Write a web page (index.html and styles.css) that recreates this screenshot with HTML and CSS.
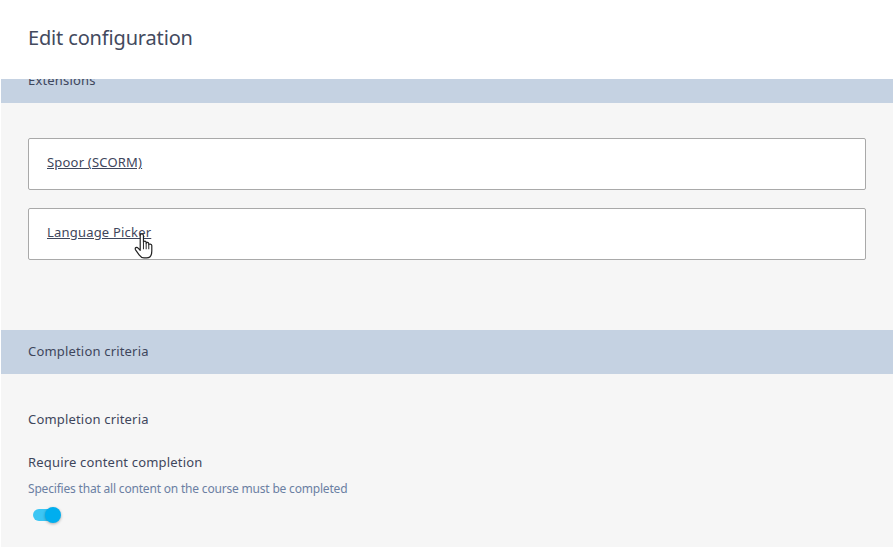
FILE: index.html
```html
<!DOCTYPE html>
<html lang="en">
<head>
  <meta charset="UTF-8" />
  <title>Edit configuration</title>
  <link rel="stylesheet" href="styles.css">
</head>
<body>

  <div class="header">
    <h1>Edit configuration</h1>
  </div>

  <div class="content">
    <div class="section-bar">Extensions</div>
    <div class="extensions">
      <div class="extension"><a href="#">Spoor (SCORM)</a></div>
      <div class="extension">
        <a href="#">Language Picker</a>
        <!-- mouse pointer caught in the shot -->
        <svg class="cursor" width="20" height="26" viewBox="0 0 18 24">
          <path d="M5.500 14V2.500C5.500 1.400 6.100 .8 7 .8S8.500 1.400 8.500 2.500V8.500C8.700 7.800 9.200 7.500 9.800 7.500S10.900 7.900 11 8.600V9.500C11.200 8.900 11.700 8.600 12.300 8.700S13.300 9.200 13.400 9.900V10.800C13.700 10.300 14.200 10.100 14.800 10.200S16.200 10.900 16.200 11.600V16.500C16.200 20 14.600 23 11.500 23H9C7 23 5.800 22 4.500 20.200L1.200 15.500C.7 14.700 .8 13.900 1.500 13.500S3 13.300 3.600 14L5.500 16Z" fill="#fff" stroke="#222" stroke-width="1.100" stroke-linejoin="round"/>
          <path d="M8.500 8.500V15M11 9.500V15M13.400 10.800V15" fill="none" stroke="#222" stroke-width=".9"/>
        </svg>
      </div>
    </div>

    <div class="section-bar">Completion criteria</div>
    <div class="criteria">
      <div class="group-title">Completion criteria</div>
      <div class="field-label">Require content completion</div>
      <div class="field-help">Specifies that all content on the course must be completed</div>
      <div class="toggle"><span class="toggle-knob"></span></div>
    </div>
  </div>

</body>
</html>
```

FILE: styles.css
```css
html, body {
  height: 100%;
}

body {
  font-family: "Noto Sans", sans-serif;
  background: #fff;
  color: #3e465c;
  margin: 0;
  overflow: hidden;
  position: relative;
}

.header {
  position: absolute;
  top: 0;
  left: 0;
  right: 0;
  height: 79px;
  background: #fff;
  z-index: 5;
}

.header h1 {
  margin: 0;
  padding: 24px 0 0 28px;
  font-size: 20px;
  line-height: 28px;
  font-weight: 400;
  letter-spacing: -0.16px;
  color: #434a5e;
}

.content {
  margin-left: 1px;
  padding-top: 59px;
  height: 488px;
  background: #f6f6f6;
}

.section-bar {
  height: 44px;
  line-height: 42px;
  padding-left: 27px;
  background: #c5d2e2;
  font-size: 13px;
  letter-spacing: 0.18px;
}

.extensions {
  padding: 35px 27px 70px;
  display: flex;
  flex-direction: column;
  gap: 18px;
}

.extension {
  position: relative;
  height: 50px;
  line-height: 46px;
  padding-left: 18px;
  background: #fff;
  border: 1px solid #a9a9a9;
  border-radius: 2px;
  font-size: 13px;
  letter-spacing: 0.2px;
}

.extension a {
  color: #3e465c;
}

.cursor {
  position: absolute;
  left: 105px;
  top: 24px;
}

.criteria {
  padding: 36px 27px 0;
  font-size: 13px;
  letter-spacing: 0.18px;
}

.group-title {
  line-height: 18px;
}

.field-label {
  margin-top: 25px;
  line-height: 18px;
}

.field-help {
  margin-top: 9px;
  line-height: 18px;
  font-size: 12px;
  letter-spacing: -0.19px;
  color: #6b7fa3;
}

.toggle {
  position: relative;
  margin: 11px 0 0 5px;
  width: 24px;
  height: 12px;
  border-radius: 6px;
  background: #3cc6f4;
}

.toggle-knob {
  position: absolute;
  right: -4px;
  top: -2px;
  width: 16px;
  height: 16px;
  border-radius: 50%;
  background: #00aeef;
  box-shadow: 0 1px 3px rgba(0,0,0,0.3);
}
```
